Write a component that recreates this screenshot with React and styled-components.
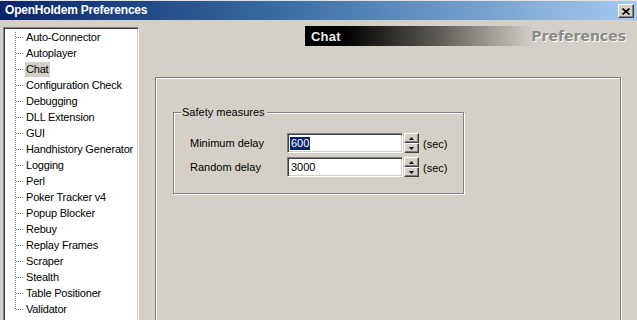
import React from 'react';
import styled, { createGlobalStyle } from 'styled-components';

const Global = createGlobalStyle`
  html, body { margin: 0; padding: 0; background: #d4d0c8; overflow: hidden; }
  body { font-family: "Liberation Sans", Arial, sans-serif; font-size: 11px; color: #000; }
  #root { width: 637px; height: 320px; }
`;

const Window = styled.div`
  width: 637px;
  height: 320px;
  background: #d4d0c8;
  display: flex;
  flex-direction: column;
  overflow: hidden;
`;

const TitleBar = styled.div`
  flex-shrink: 0;
  height: 19px;
  border-top: 1px solid #e4e2dc;
  background: linear-gradient(to right, #0a246a 0%, #3a6ea5 45%, #a6caf0 100%);
  display: flex;
  align-items: center;
  justify-content: space-between;
  padding: 0 3px 0 5px;
`;

const TitleText = styled.span`
  color: #fff;
  font-weight: bold;
  font-size: 12px;
  letter-spacing: -0.2px;
  line-height: 19px;
`;

const CloseButton = styled.div`
  width: 14px;
  height: 12px;
  background: #d4d0c8;
  border-top: 1px solid #fff;
  border-left: 1px solid #fff;
  border-right: 1px solid #404040;
  border-bottom: 1px solid #404040;
  box-shadow: inset -1px -1px 0 #808080;
  display: flex;
  align-items: center;
  justify-content: center;
  margin-top: 1px;
`;

const Body = styled.div`
  flex: 1;
  display: flex;
  min-height: 0;
`;

const Tree = styled.ul`
  position: relative;
  list-style: none;
  margin: 7px 0 0 3px;
  padding: 1px 0 0 0;
  width: 134px;
  height: 300px;
  flex-shrink: 0;
  background: #fff;
  border-top: 1px solid #808080;
  border-left: 1px solid #808080;
  border-right: 1px solid #fff;
  border-bottom: 1px solid #fff;
  box-shadow: inset 1px 1px 0 #404040, inset -1px -1px 0 #d4d0c8;

  &::before {
    content: '';
    position: absolute;
    left: 11px;
    top: 4px;
    height: 277px;
    width: 1px;
    background: repeating-linear-gradient(to bottom, #808080 0 1px, transparent 1px 2px);
  }
`;

const TreeItem = styled.li`
  position: relative;
  height: 16px;
  display: flex;
  align-items: center;
  padding-left: 21px;
  letter-spacing: -0.2px;

  &::before {
    content: '';
    position: absolute;
    left: 12px;
    top: 8px;
    width: 8px;
    height: 1px;
    background: repeating-linear-gradient(to right, #808080 0 1px, transparent 1px 2px);
  }
`;

const ItemLabel = styled.span`
  padding: 0 2px 0 1px;
  line-height: 15px;
  background: ${(p) => (p.$selected ? '#d4d0c8' : 'transparent')};
`;

const RightPane = styled.div`
  flex: 1;
  display: flex;
  flex-direction: column;
  padding: 6px 5px 0 16px;
  min-width: 0;
`;

const Header = styled.div`
  align-self: flex-end;
  width: 327px;
  height: 20px;
  flex-shrink: 0;
  background: linear-gradient(to right, #000 0%, #000 12%, #5a5852 40%, #d4d0c8 70%, #d4d0c8 100%);
  display: flex;
  align-items: center;
  justify-content: space-between;
  padding: 0 6px 0 6px;
  box-sizing: border-box;
`;

const HeaderTitle = styled.span`
  color: #ececec;
  font-weight: bold;
  font-size: 13px;
  letter-spacing: 0.2px;
`;

const HeaderBrand = styled.span`
  font-family: "DejaVu Sans", Verdana, sans-serif;
  color: #8c8c8c;
  font-weight: bold;
  font-size: 14px;
  text-shadow: 1px 1px 0 #fff;
`;

const Panel = styled.div`
  margin: 31px 11px 0 0;
  height: 300px;
  flex-shrink: 0;
  border: 1px solid #808080;
  box-shadow: inset 1px 1px 0 #fff, 1px 1px 0 #fff;
  padding: 34px 0 0 17px;
`;

const GroupBox = styled.div`
  position: relative;
  width: 287px;
  height: 79px;
  border: 1px solid #808080;
  box-shadow: inset 1px 1px 0 #fff, 1px 1px 0 #fff;
  padding: 20px 0 0 16px;
  box-sizing: content-box;
  display: flex;
  flex-direction: column;
  gap: 4px;
  width: 273px;
  height: 60px;
`;

const GroupLegend = styled.span`
  position: absolute;
  left: 7px;
  top: -8px;
  padding: 0 2px 0 1px;
  background: #d4d0c8;
  line-height: 14px;
`;

const FieldRow = styled.div`
  display: flex;
  align-items: center;
  height: 20px;
`;

const FieldLabel = styled.span`
  width: 97px;
  flex-shrink: 0;
`;

const EditBox = styled.div`
  width: 111px;
  height: 16px;
  background: #fff;
  border-top: 1px solid #808080;
  border-left: 1px solid #808080;
  border-right: 1px solid #fff;
  border-bottom: 1px solid #fff;
  box-shadow: inset 1px 1px 0 #404040, inset -1px -1px 0 #d4d0c8;
  padding: 1px 1px 1px 2px;
  display: flex;
  align-items: center;
`;

const EditText = styled.span`
  padding: 0 1px;
  line-height: 13px;
  background: ${(p) => (p.$selected ? '#0a246a' : 'transparent')};
  color: ${(p) => (p.$selected ? '#fff' : '#000')};
`;

const Spin = styled.div`
  display: flex;
  flex-direction: column;
  margin-left: 1px;
`;

const SpinButton = styled.div`
  width: 13px;
  height: 8px;
  background: #d4d0c8;
  border-top: 1px solid #fff;
  border-left: 1px solid #fff;
  border-right: 1px solid #404040;
  border-bottom: 1px solid #404040;
  box-shadow: inset -1px -1px 0 #808080;
  display: flex;
  align-items: center;
  justify-content: center;
`;

const Unit = styled.span`
  margin-left: 4px;
  padding-top: 2px;
`;

const items = [
  'Auto-Connector', 'Autoplayer', 'Chat', 'Configuration Check', 'Debugging',
  'DLL Extension', 'GUI', 'Handhistory Generator', 'Logging', 'Perl',
  'Poker Tracker v4', 'Popup Blocker', 'Rebuy', 'Replay Frames', 'Scraper',
  'Stealth', 'Table Positioner', 'Validator',
];

const Arrow = ({ up }) => (
  <svg width="5" height="3" viewBox="0 0 5 3">
    {up ? <polygon points="0,3 5,3 2.5,0" fill="#000" /> : <polygon points="0,0 5,0 2.5,3" fill="#000" />}
  </svg>
);

const SpinField = ({ label, value, selected }) => (
  <FieldRow>
    <FieldLabel>{label}</FieldLabel>
    <EditBox>
      <EditText $selected={selected}>{value}</EditText>
    </EditBox>
    <Spin>
      <SpinButton><Arrow up /></SpinButton>
      <SpinButton><Arrow /></SpinButton>
    </Spin>
    <Unit>(sec)</Unit>
  </FieldRow>
);

export default function App() {
  return (
    <>
      <Global />
      <Window>
        <TitleBar>
          <TitleText>OpenHoldem Preferences</TitleText>
          <CloseButton>
            <svg width="8" height="7" viewBox="0 0 8 7">
              <path d="M0.5 0.5 L7.5 6.5 M7.5 0.5 L0.5 6.5" stroke="#000" strokeWidth="1.6" />
            </svg>
          </CloseButton>
        </TitleBar>
        <Body>
          <Tree>
            {items.map((it) => (
              <TreeItem key={it}>
                <ItemLabel $selected={it === 'Chat'}>{it}</ItemLabel>
              </TreeItem>
            ))}
          </Tree>
          <RightPane>
            <Header>
              <HeaderTitle>Chat</HeaderTitle>
              <HeaderBrand>Preferences</HeaderBrand>
            </Header>
            <Panel>
              <GroupBox>
                <GroupLegend>Safety measures</GroupLegend>
                <SpinField label="Minimum delay" value="600" selected />
                <SpinField label="Random delay" value="3000" />
              </GroupBox>
            </Panel>
          </RightPane>
        </Body>
      </Window>
    </>
  );
}
